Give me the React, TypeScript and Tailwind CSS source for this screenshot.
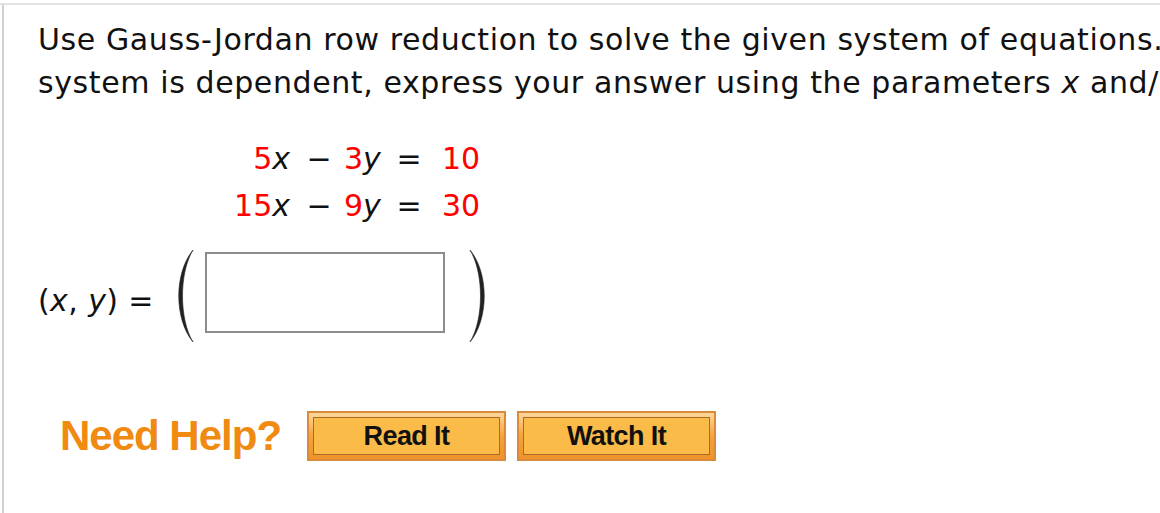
import React from "react";

const Paren = ({ flip }: { flip?: boolean }) => (
  <svg width="22" height="96" viewBox="0 0 22 96" style={flip ? { transform: "scaleX(-1)" } : undefined}>
    <path
      d="M19 2 C 0 25, 0 71, 19 94 C 5 71, 5 25, 19 2 Z"
      fill="#222"
      stroke="#222"
      strokeWidth="0.6"
      strokeLinejoin="round"
    />
  </svg>
);

const HelpButton = ({ label }: { label: string }) => (
  <div className="w-[199px] h-[50px] border-2 border-[#d98a3a] bg-gradient-to-b from-[#fcd79a] via-[#f5a23a] to-[#f0922a] p-[4px]">
    <div className="h-full border border-[#a86b2a] bg-[#fbbb48] flex items-center justify-center">
      <span className="font-['Liberation_Sans',Arial,sans-serif] font-bold text-[27px] leading-none text-[#111] tracking-[-0.6px]">
        {label}
      </span>
    </div>
  </div>
);

export default function App() {
  const eqFont = "font-['DejaVu_Sans',Verdana,sans-serif]";
  return (
    <div className="w-[1160px] h-[513px] bg-white overflow-hidden">
      <div className="mt-[3px] border-t-2 border-[#e2e2e2]">
        <div className="ml-[2px] border-l-2 border-[#d0d0d0] h-[510px] pl-[34px] pt-[13px]">
          <div className={`${eqFont} text-[30px] leading-[43px] tracking-[0.6px] text-[#111] whitespace-nowrap`}>
            <div>Use Gauss-Jordan row reduction to solve the given system of equations. If the</div>
            <div>
              system is dependent, express your answer using the parameters <i>x</i> and/or <i>y</i>.
            </div>
          </div>

          <div className={`${eqFont} text-[30px] leading-[47px] mt-[31px] grid grid-cols-[252px_54px_45px_40px_auto] w-max`}>
            <div className="text-right"><span className="text-[#ff0000]">5</span><i className="text-[#111]">x</i></div>
            <div className="text-center text-[#111] pl-[4px]">−</div>
            <div><span className="text-[#ff0000]">3</span><i className="text-[#111]">y</i></div>
            <div className="text-center text-[#111]">=</div>
            <div className="pl-[13px] text-[#ff0000]">10</div>

            <div className="text-right"><span className="text-[#ff0000]">15</span><i className="text-[#111]">x</i></div>
            <div className="text-center text-[#111] pl-[4px]">−</div>
            <div><span className="text-[#ff0000]">9</span><i className="text-[#111]">y</i></div>
            <div className="text-center text-[#111]">=</div>
            <div className="pl-[13px] text-[#ff0000]">30</div>
          </div>

          <div className="mt-[19px] flex items-center h-[96px]">
            <div className={`${eqFont} w-[136px] text-[30px] leading-[43px] tracking-[0.4px] text-[#111] whitespace-nowrap mt-[8px]`}>
              (<i>x</i>, <i>y</i>) =
            </div>
            <Paren />
            <div className="ml-[9px] mb-[8px] w-[240px] h-[81px] border-2 border-[#8c8c8c] bg-white" />
            <div className="ml-[22px]"><Paren flip /></div>
          </div>

          <div className="mt-[67px] flex items-center">
            <div className="ml-[22px] w-[247px] font-['Liberation_Sans',Arial,sans-serif] font-bold text-[42px] leading-none text-[#f08a10] tracking-[-1px] whitespace-nowrap">
              Need Help?
            </div>
            <HelpButton label="Read It" />
            <div className="ml-[11px]"><HelpButton label="Watch It" /></div>
          </div>
        </div>
      </div>
    </div>
  );
}
